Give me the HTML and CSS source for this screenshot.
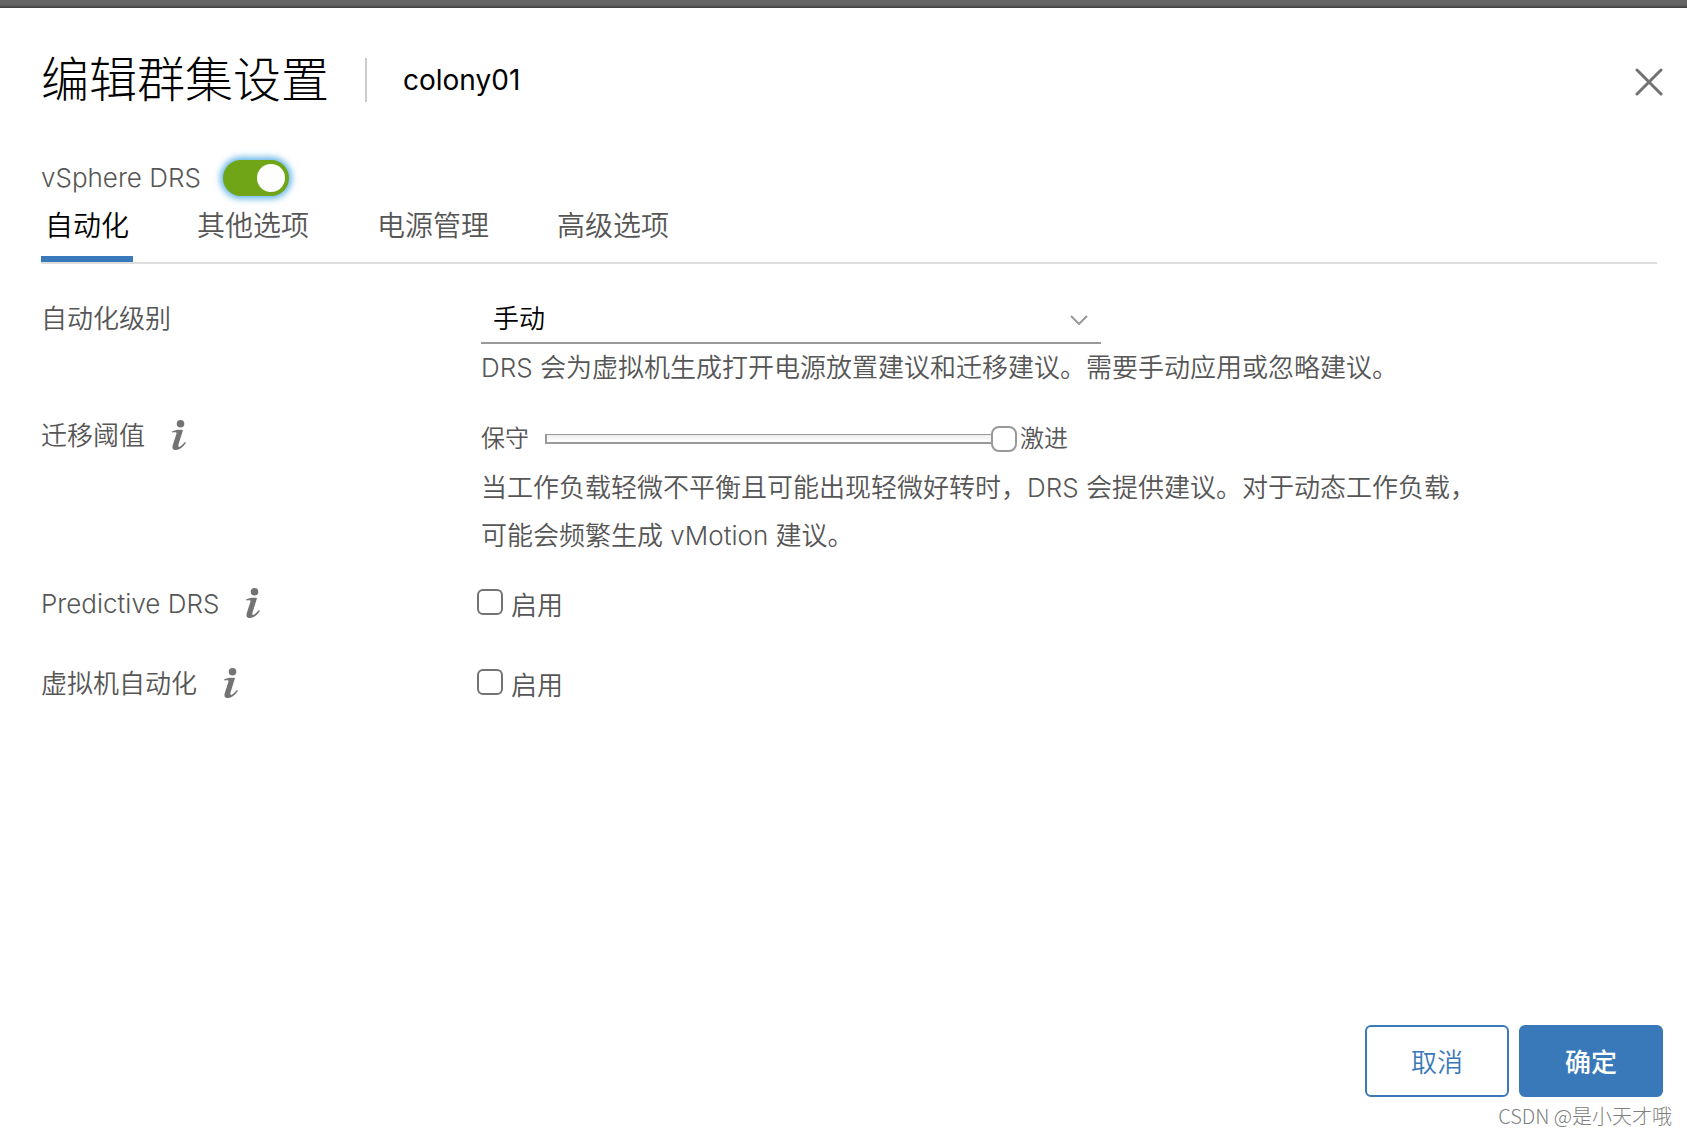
FILE: index.html
```html
<!DOCTYPE html>
<html lang="zh-CN">
<head>
<meta charset="UTF-8">
<meta name="viewport" content="width=device-width, initial-scale=1.0">
<title>编辑群集设置</title>
<link rel="stylesheet" href="styles.css">
</head>
<body>
<form class="modal">
    <header class="modal-header">
        <h1>编辑群集设置</h1>
        <span class="cluster-name">colony01</span>
        <button type="button" class="close" aria-label="关闭">
            <svg width="28" height="28" viewBox="0 0 28 28"><path d="M2 2L26 26M26 2L2 26" fill="none" stroke="#717171" stroke-width="3" stroke-linecap="round"/></svg>
        </button>
    </header>

    <div class="drs">
        <label for="drs">vSphere DRS</label>
        <input type="checkbox" class="toggle" id="drs" checked>
    </div>

    <nav class="tabs">
        <button type="button" class="tab active">自动化</button>
        <button type="button" class="tab">其他选项</button>
        <button type="button" class="tab">电源管理</button>
        <button type="button" class="tab">高级选项</button>
    </nav>

    <div class="rows">
        <div class="row">
            <label class="name" for="level">自动化级别</label>
            <div class="value">
                <div class="select">
                    <select id="level">
                        <option>手动</option>
                        <option>半自动</option>
                        <option>全自动</option>
                    </select>
                    <svg class="chevron" width="18" height="10" viewBox="0 0 18 10"><path d="M1 1L9 9L17 1" fill="none" stroke="#999" stroke-width="2"/></svg>
                </div>
                <p>DRS 会为虚拟机生成打开电源放置建议和迁移建议。需要手动应用或忽略建议。</p>
            </div>
        </div>
        <div class="row">
            <div class="name">
                <label for="threshold">迁移阈值</label>
                <button type="button" class="info" aria-label="信息">
                    <svg width="14" height="30" viewBox="0 0 14 30"><circle cx="8.5" cy="3.8" r="3.8"/><path d="M0 11.5C3 10 7 9.5 11 10L6.5 24.5C5.8 27.5 7.5 27.5 9.5 25.5L13 22L14 22.8C11 27.5 7.5 30 4 30C0.5 30 0 28 0.8 25L4.5 13.5C5 12 3 12 0.3 12.5Z"/></svg>
                </button>
            </div>
            <div class="value">
                <div class="slider">
                    <span>保守</span>
                    <input type="range" id="threshold" min="1" max="5" value="5">
                    <span>激进</span>
                </div>
                <p>当工作负载轻微不平衡且可能出现轻微好转时，DRS 会提供建议。对于动态工作负载，可能会频繁生成 vMotion 建议。</p>
            </div>
        </div>
        <div class="row">
            <div class="name">
                <span>Predictive DRS</span>
                <button type="button" class="info" aria-label="信息">
                    <svg width="14" height="30" viewBox="0 0 14 30"><circle cx="8.5" cy="3.8" r="3.8"/><path d="M0 11.5C3 10 7 9.5 11 10L6.5 24.5C5.8 27.5 7.5 27.5 9.5 25.5L13 22L14 22.8C11 27.5 7.5 30 4 30C0.5 30 0 28 0.8 25L4.5 13.5C5 12 3 12 0.3 12.5Z"/></svg>
                </button>
            </div>
            <div class="value check">
                <input type="checkbox" id="predictive">
                <label for="predictive">启用</label>
            </div>
        </div>
        <div class="row">
            <div class="name">
                <span>虚拟机自动化</span>
                <button type="button" class="info" aria-label="信息">
                    <svg width="14" height="30" viewBox="0 0 14 30"><circle cx="8.5" cy="3.8" r="3.8"/><path d="M0 11.5C3 10 7 9.5 11 10L6.5 24.5C5.8 27.5 7.5 27.5 9.5 25.5L13 22L14 22.8C11 27.5 7.5 30 4 30C0.5 30 0 28 0.8 25L4.5 13.5C5 12 3 12 0.3 12.5Z"/></svg>
                </button>
            </div>
            <div class="value check">
                <input type="checkbox" id="vm">
                <label for="vm">启用</label>
            </div>
        </div>
    </div>

    <footer class="modal-footer">
        <button type="button" class="btn">取消</button>
        <button type="submit" class="btn primary">确定</button>
    </footer>
    <div class="watermark">CSDN @是小天才哦</div>
</form>
</body>
</html>
```

FILE: styles.css
```css
* {
    box-sizing: border-box;
}
body {
    margin: 0;
    font-family: Inter, "Noto Sans CJK SC", sans-serif;
    font-size: 26px;
    font-weight: 350;
    line-height: 48px;
    color: #565656;
    background: #fff;
}
button, input, select {
    margin: 0;
    padding: 0;
    border: 0;
    background: none;
    font: inherit;
    color: inherit;
}
h1, p {
    margin: 0;
}
svg {
    display: block;
}
.modal {
    display: flex;
    flex-direction: column;
    min-height: 100vh;
    padding: 0 24px 0 41px;
}
.modal::before {
    content: "";
    height: 8px;
    margin: 0 -24px 0 -41px;
    background: linear-gradient(#666 0 4px, #5a5a5a 6px, #444 7px);
}
.modal-header {
    display: flex;
    align-items: center;
    height: 64px;
    margin-top: 40px;
    color: #000;
}
h1 {
    font-size: 48px;
    font-weight: 300;
    line-height: 64px;
}
.cluster-name {
    margin-left: 36px;
    padding-left: 36px;
    border-left: 2px solid #ccc;
    font-size: 28px;
    font-weight: 400;
    line-height: 44px;
}
.close {
    margin-left: auto;
    padding-top: 4px;
}
.drs {
    display: flex;
    align-items: center;
    gap: 22px;
    height: 36px;
    margin-top: 48px;
}
.toggle {
    appearance: none;
    width: 66px;
    height: 36px;
    padding: 4px;
    border-radius: 18px;
    background: #6fa516;
    box-shadow: 0 0 6px 3px #6bb8e8;
}
.toggle::before {
    content: "";
    display: block;
    width: 28px;
    height: 28px;
    margin-left: auto;
    border-radius: 50%;
    background: #fff;
}
.tabs {
    display: flex;
    gap: 60px;
    margin-right: 6px;
    border-bottom: 2px solid #ddd;
}
.tab {
    padding: 0 4px;
    border-bottom: 6px solid transparent;
    font-size: 28px;
    line-height: 60px;
}
.tab.active {
    border-color: #3a79b9;
    color: #000;
}
.rows {
    display: flex;
    flex-direction: column;
    gap: 20px;
    margin-top: 31px;
}
.row {
    display: grid;
    grid-template-columns: 440px 1fr;
    min-height: 60px;
}
.name {
    display: flex;
    align-items: center;
    gap: 27px;
    height: 48px;
}
.info {
    padding-bottom: 2px;
    fill: #737373;
}
.value p {
    max-width: 1000px;
}
.select {
    position: relative;
    width: 620px;
}
.select select {
    display: block;
    appearance: none;
    width: 100%;
    height: 49px;
    padding: 0 12px;
    border-bottom: 2px solid #999;
    color: #000;
}
.chevron {
    position: absolute;
    right: 13px;
    top: 20px;
    pointer-events: none;
}
.slider {
    display: flex;
    align-items: center;
    height: 52px;
    padding-top: 2px;
    font-size: 24px;
}
.slider input {
    appearance: none;
    width: 472px;
    height: 26px;
    margin: 0 3px 0 16px;
}
.slider input::-webkit-slider-runnable-track {
    height: 10px;
    border: 1px solid #999;
    border-width: 1px 0 2px 2px;
    background: linear-gradient(#eee, #fff);
}
.slider input::-webkit-slider-thumb {
    appearance: none;
    width: 26px;
    height: 26px;
    margin-top: -9px;
    border: 2px solid #999;
    border-radius: 8px;
    background: #fff;
}
.check {
    display: flex;
    align-items: flex-start;
    gap: 8px;
    margin-left: -4px;
}
.check label {
    padding-top: 2px;
}
.check input {
    appearance: none;
    width: 26px;
    height: 26px;
    margin-top: 9px;
    border: 2px solid #737373;
    border-radius: 6px;
}
.modal-footer {
    display: flex;
    justify-content: flex-end;
    gap: 10px;
    margin-top: auto;
}
.btn {
    width: 144px;
    height: 72px;
    padding-top: 4px;
    border: 2px solid #3a79b9;
    border-radius: 6px;
    color: #3a79b9;
}
.btn.primary {
    background: #3a79b9;
    color: #fff;
    font-weight: 500;
}
.watermark {
    margin-right: -9px;
    font-family: "Noto Sans CJK SC", sans-serif;
    font-size: 20px;
    font-weight: 300;
    line-height: 38px;
    text-align: right;
    color: #808080;
}
```
